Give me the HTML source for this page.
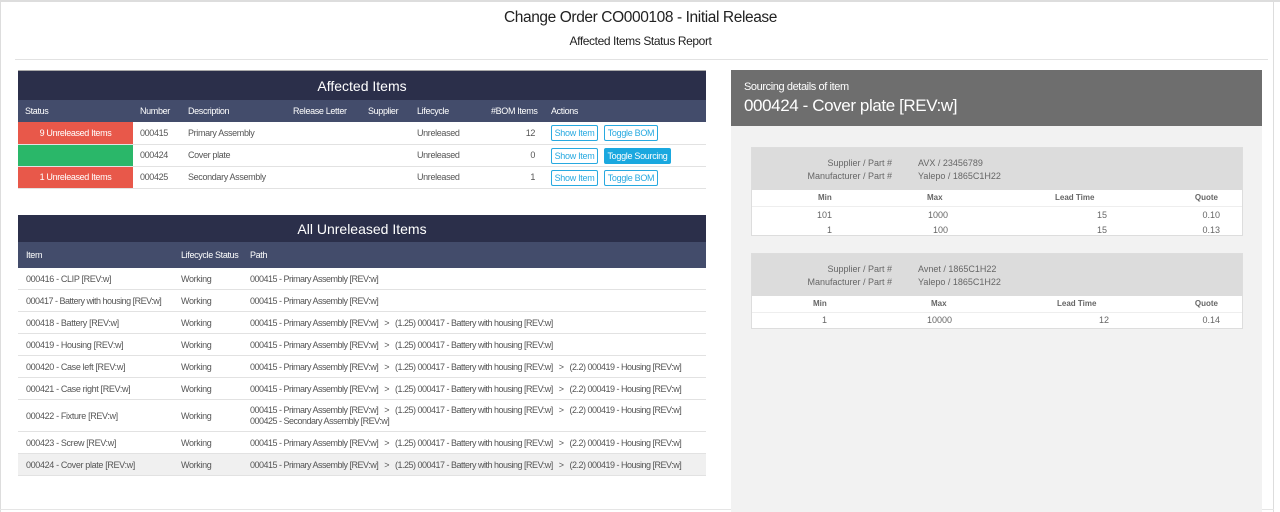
<!DOCTYPE html>
<html><head><meta charset="utf-8"><style>
*{margin:0;padding:0;box-sizing:border-box}
body{width:1280px;height:512px;overflow:hidden;background:#fff;font-family:"Liberation Sans",sans-serif;position:relative;color:#555}
.a{position:absolute;white-space:nowrap}
.t{font-size:9px;letter-spacing:-0.35px}
.p{letter-spacing:-0.5px}
.hd{background:#2b2f4a;color:#fff;text-align:center}
.ch{background:#434c6b;color:#fff}
.row{position:absolute;left:18px;width:688px;border-bottom:1px solid #e2e2e2}
.btn{position:absolute;border:1px solid #27a9e0;color:#27a9e0;border-radius:2px;font-size:9px;height:16px;line-height:14px;text-align:center;letter-spacing:-0.3px;background:#fff}
.card{position:absolute;left:751px;width:492px;background:#fff;border:1px solid #ddd}
.ct{font-size:8px;color:#666}
</style></head><body>
<div class="a" style="left:0;top:0;width:1280px;height:2px;background:#ddd"></div>
<div class="a" style="left:1273px;top:0;width:1px;height:512px;background:#ddd"></div>
<div class="a" style="left:0;top:0;width:1px;height:512px;background:#ddd"></div>
<div class="a" style="left:0;top:509px;width:1274px;height:1px;background:#e5e5e5"></div>
<div class="a" style="left:0;width:1281px;top:9px;text-align:center;font-size:15.5px;color:#222;letter-spacing:-0.4px">Change Order CO000108 - Initial Release</div>
<div class="a" style="left:0;width:1281px;top:34px;text-align:center;font-size:12px;color:#222;letter-spacing:-0.4px">Affected Items Status Report</div>
<div class="a" style="left:15px;top:59px;width:1253px;height:1px;background:#e2e2e2"></div>

<div class="a hd" style="left:18px;top:70px;width:688px;height:30px;line-height:30px;font-size:14px;border-top:1px solid #aaa">Affected Items</div>
<div class="a ch t" style="left:18px;top:100px;width:688px;height:22px;line-height:22px">
<span class="a" style="left:7px">Status</span><span class="a" style="left:122px">Number</span><span class="a" style="left:170px">Description</span><span class="a" style="left:275px">Release Letter</span><span class="a" style="left:350px">Supplier</span><span class="a" style="left:399px">Lifecycle</span><span class="a" style="left:473px">#BOM Items</span><span class="a" style="left:533px">Actions</span></div>

<div class="row t" style="top:122px;height:23px;line-height:22px">
<div class="a" style="left:0;width:115px;height:22px;background:#e8584a;color:#fff;text-align:center">9 Unreleased Items</div>
<span class="a" style="left:122px">000415</span><span class="a" style="left:170px">Primary Assembly</span><span class="a" style="left:399px">Unreleased</span><span class="a" style="left:490px;width:27px;text-align:right">12</span>
<div class="btn" style="left:533px;top:3px;width:47px">Show Item</div><div class="btn" style="left:586px;top:3px;width:54px">Toggle BOM</div></div>
<div class="row t" style="top:145px;height:22px;line-height:21px">
<div class="a" style="left:0;width:115px;height:21px;background:#2ab769"></div>
<span class="a" style="left:122px">000424</span><span class="a" style="left:170px">Cover plate</span><span class="a" style="left:399px">Unreleased</span><span class="a" style="left:490px;width:27px;text-align:right">0</span>
<div class="btn" style="left:533px;top:3px;width:47px">Show Item</div><div class="btn" style="left:586px;top:3px;width:67px;background:#1aa8df;color:#fff;border-color:#1aa8df">Toggle Sourcing</div></div>
<div class="row t" style="top:167px;height:22px;line-height:21px">
<div class="a" style="left:0;width:115px;height:21px;background:#e8584a;color:#fff;text-align:center">1 Unreleased Items</div>
<span class="a" style="left:122px">000425</span><span class="a" style="left:170px">Secondary Assembly</span><span class="a" style="left:399px">Unreleased</span><span class="a" style="left:490px;width:27px;text-align:right">1</span>
<div class="btn" style="left:533px;top:3px;width:47px">Show Item</div><div class="btn" style="left:586px;top:3px;width:54px">Toggle BOM</div></div>

<div class="a hd" style="left:18px;top:215px;width:688px;height:27px;line-height:29px;font-size:14px">All Unreleased Items</div>
<div class="a ch t" style="left:18px;top:242px;width:688px;height:26px;line-height:27px">
<span class="a" style="left:8px">Item</span><span class="a" style="left:163px">Lifecycle Status</span><span class="a" style="left:232px">Path</span></div>

<div class="row t" style="top:268px;height:22px;line-height:22px"><span class="a" style="left:8px">000416 - CLIP [REV:w]</span><span class="a" style="left:163px">Working</span><span class="a p" style="left:232px">000415 - Primary Assembly [REV:w]</span></div>
<div class="row t" style="top:290px;height:22px;line-height:22px"><span class="a p" style="left:8px">000417 - Battery with housing [REV:w]</span><span class="a" style="left:163px">Working</span><span class="a p" style="left:232px">000415 - Primary Assembly [REV:w]</span></div>
<div class="row t" style="top:312px;height:22px;line-height:22px"><span class="a" style="left:8px">000418 - Battery [REV:w]</span><span class="a" style="left:163px">Working</span><span class="a p" style="left:232px">000415 - Primary Assembly [REV:w] &nbsp;&nbsp;&gt;&nbsp;&nbsp; (1.25) 000417 - Battery with housing [REV:w]</span></div>
<div class="row t" style="top:334px;height:22px;line-height:22px"><span class="a" style="left:8px">000419 - Housing [REV:w]</span><span class="a" style="left:163px">Working</span><span class="a p" style="left:232px">000415 - Primary Assembly [REV:w] &nbsp;&nbsp;&gt;&nbsp;&nbsp; (1.25) 000417 - Battery with housing [REV:w]</span></div>
<div class="row t" style="top:356px;height:22px;line-height:22px"><span class="a" style="left:8px">000420 - Case left [REV:w]</span><span class="a" style="left:163px">Working</span><span class="a p" style="left:232px">000415 - Primary Assembly [REV:w] &nbsp;&nbsp;&gt;&nbsp;&nbsp; (1.25) 000417 - Battery with housing [REV:w] &nbsp;&nbsp;&gt;&nbsp;&nbsp; (2.2) 000419 - Housing [REV:w]</span></div>
<div class="row t" style="top:378px;height:22px;line-height:22px"><span class="a" style="left:8px">000421 - Case right [REV:w]</span><span class="a" style="left:163px">Working</span><span class="a p" style="left:232px">000415 - Primary Assembly [REV:w] &nbsp;&nbsp;&gt;&nbsp;&nbsp; (1.25) 000417 - Battery with housing [REV:w] &nbsp;&nbsp;&gt;&nbsp;&nbsp; (2.2) 000419 - Housing [REV:w]</span></div>
<div class="row t" style="top:400px;height:32px;line-height:32px"><span class="a" style="left:8px">000422 - Fixture [REV:w]</span><span class="a" style="left:163px">Working</span><span class="a p" style="left:232px;top:5px;line-height:11px">000415 - Primary Assembly [REV:w] &nbsp;&nbsp;&gt;&nbsp;&nbsp; (1.25) 000417 - Battery with housing [REV:w] &nbsp;&nbsp;&gt;&nbsp;&nbsp; (2.2) 000419 - Housing [REV:w]<br>000425 - Secondary Assembly [REV:w]</span></div>
<div class="row t" style="top:432px;height:22px;line-height:22px"><span class="a" style="left:8px">000423 - Screw [REV:w]</span><span class="a" style="left:163px">Working</span><span class="a p" style="left:232px">000415 - Primary Assembly [REV:w] &nbsp;&nbsp;&gt;&nbsp;&nbsp; (1.25) 000417 - Battery with housing [REV:w] &nbsp;&nbsp;&gt;&nbsp;&nbsp; (2.2) 000419 - Housing [REV:w]</span></div>
<div class="row t" style="top:454px;height:22px;line-height:22px;background:#f0f0f0"><span class="a" style="left:8px">000424 - Cover plate [REV:w]</span><span class="a" style="left:163px">Working</span><span class="a p" style="left:232px">000415 - Primary Assembly [REV:w] &nbsp;&nbsp;&gt;&nbsp;&nbsp; (1.25) 000417 - Battery with housing [REV:w] &nbsp;&nbsp;&gt;&nbsp;&nbsp; (2.2) 000419 - Housing [REV:w]</span></div>

<div class="a" style="left:731px;top:70px;width:531px;height:442px;background:#f2f2f2"></div>
<div class="a" style="left:731px;top:70px;width:531px;height:56px;background:#6e6e6e;color:#fff">
<div class="a" style="left:13px;top:11px;font-size:11px;letter-spacing:-0.4px">Sourcing details of item</div>
<div class="a" style="left:13px;top:26px;font-size:17px;letter-spacing:-0.4px">000424 - Cover plate [REV:w]</div></div>

<div class="card" style="top:147px;height:89px">
<div class="a" style="left:0;top:0;width:490px;height:42px;background:#dcdcdc"></div>
<div class="a ct" style="left:0;width:140px;text-align:right;top:9px;line-height:13px;font-size:9px">Supplier / Part #<br>Manufacturer / Part #</div>
<div class="a ct" style="left:166px;top:9px;line-height:13px;font-size:9px">AVX / 23456789<br>Yalepo / 1865C1H22</div>
<div class="a" style="left:0;top:58px;width:490px;height:1px;background:#eee"></div>
<div class="a ct" style="top:45px;left:66px;font-weight:bold">Min</div><div class="a ct" style="top:45px;left:175px;font-weight:bold">Max</div><div class="a ct" style="top:45px;left:303px;font-weight:bold">Lead Time</div><div class="a ct" style="top:45px;left:426px;width:40px;text-align:right;font-weight:bold">Quote</div>
<div class="a ct" style="top:60px;left:40px;width:40px;text-align:right;line-height:15px;font-size:9px">101<br>1</div>
<div class="a ct" style="top:60px;left:150px;width:46px;text-align:right;line-height:15px;font-size:9px">1000<br>100</div>
<div class="a ct" style="top:60px;left:300px;width:55px;text-align:right;line-height:15px;font-size:9px">15<br>15</div>
<div class="a ct" style="top:60px;left:420px;width:48px;text-align:right;line-height:15px;font-size:9px">0.10<br>0.13</div>
</div>

<div class="card" style="top:253px;height:76px">
<div class="a" style="left:0;top:0;width:490px;height:42px;background:#dcdcdc"></div>
<div class="a ct" style="left:0;width:140px;text-align:right;top:9px;line-height:13px;font-size:9px">Supplier / Part #<br>Manufacturer / Part #</div>
<div class="a ct" style="left:166px;top:9px;line-height:13px;font-size:9px">Avnet / 1865C1H22<br>Yalepo / 1865C1H22</div>
<div class="a" style="left:0;top:58px;width:490px;height:1px;background:#eee"></div>
<div class="a ct" style="top:45px;left:61px;font-weight:bold">Min</div><div class="a ct" style="top:45px;left:179px;font-weight:bold">Max</div><div class="a ct" style="top:45px;left:305px;font-weight:bold">Lead Time</div><div class="a ct" style="top:45px;left:426px;width:40px;text-align:right;font-weight:bold">Quote</div>
<div class="a ct" style="top:61px;left:40px;width:35px;text-align:right;font-size:9px">1</div>
<div class="a ct" style="top:61px;left:150px;width:50px;text-align:right;font-size:9px">10000</div>
<div class="a ct" style="top:61px;left:300px;width:57px;text-align:right;font-size:9px">12</div>
<div class="a ct" style="top:61px;left:420px;width:48px;text-align:right;font-size:9px">0.14</div>
</div>
</body></html>
